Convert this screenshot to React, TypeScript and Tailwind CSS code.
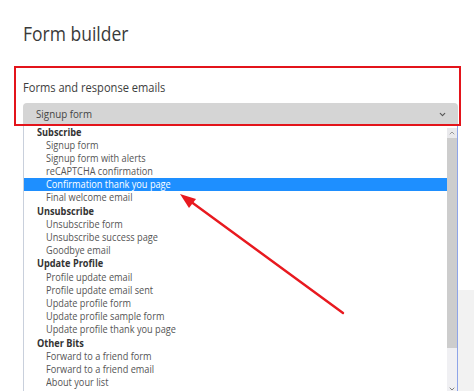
import { ChevronDown, ChevronUp } from 'lucide-react';

const groups: Array<{ title: string; items: string[] }> = [
  {
    title: 'Subscribe',
    items: [
      'Signup form',
      'Signup form with alerts',
      'reCAPTCHA confirmation',
      'Confirmation thank you page',
      'Final welcome email',
    ],
  },
  {
    title: 'Unsubscribe',
    items: ['Unsubscribe form', 'Unsubscribe success page', 'Goodbye email'],
  },
  {
    title: 'Update Profile',
    items: [
      'Profile update email',
      'Profile update email sent',
      'Update profile form',
      'Update profile sample form',
      'Update profile thank you page',
    ],
  },
  {
    title: 'Other Bits',
    items: ['Forward to a friend form', 'Forward to a friend email', 'About your list'],
  },
];

const selected = 'Confirmation thank you page';

export default function App() {
  return (
    <div
      className="relative w-[474px] h-[391px] overflow-hidden bg-white text-[#333]"
      style={{ fontFamily: '"Open Sans", "Noto Sans", sans-serif' }}
    >
      <div className="flex h-full">
        {/* Main column */}
        <div className="w-[458px] shrink-0 pl-[23px]">
          <h1 className="pt-[20px] text-[20px] leading-[27px] text-[#3a3a3a]">
            <span className="inline-block origin-left scale-x-[0.875] whitespace-nowrap">Form builder</span>
          </h1>

          <p className="mt-[31px] text-[12.7px] leading-[18px] text-[#3d3d3d]">
            <span className="inline-block origin-left scale-x-[0.875] whitespace-nowrap">
              Forms and response emails
            </span>
          </p>

          {/* Select */}
          <div className="mt-[7px] h-[22px] rounded-t-[4px] bg-[#d5d5d5] flex items-center justify-between pl-[13px] pr-[11px]">
            <span className="inline-block origin-left scale-x-[0.875] whitespace-nowrap text-[11.2px] text-[#444]">
              Signup form
            </span>
            <ChevronDown size={9} strokeWidth={3} className="text-[#555]" />
          </div>

          {/* Dropdown list */}
          <div className="h-[270px] flex border-l border-[#c9d0dc]">
            <div className="flex-1 pt-[0.5px]">
              {groups.map((g) => (
                <div key={g.title}>
                  <div className="h-[13.2px] leading-[13.2px] pl-[13px] text-[10.5px] font-bold text-[#333]">
                    <span className="inline-block origin-left scale-x-[0.875] whitespace-nowrap">{g.title}</span>
                  </div>
                  {g.items.map((item) => (
                    <div
                      key={item}
                      className={`h-[13.2px] leading-[13.2px] pl-[22px] text-[10.5px] ${
                        item === selected ? 'bg-[#1e8fff] text-white' : 'text-[#555]'
                      }`}
                    >
                      <span className="inline-block origin-left scale-x-[0.875] whitespace-nowrap">{item}</span>
                    </div>
                  ))}
                </div>
              ))}
            </div>

            {/* Scrollbar */}
            <div className="w-[11px] pt-[3px] flex flex-col border-r border-[#8ea4e8]">
              <div className="flex flex-col h-[220px] bg-[#cdcdcd]">
                <div className="h-[10px] bg-[#e9e9ec] flex items-center justify-center">
                  <ChevronUp size={8} strokeWidth={2.5} className="text-[#888]" />
                </div>
              </div>
              <div className="flex-1 bg-[#f0f0f3] flex flex-col justify-end items-center pb-[2px]">
                <ChevronDown size={8} strokeWidth={2.5} className="text-[#666]" />
              </div>
            </div>
          </div>
        </div>

        {/* Right side panel */}
        <div className="flex-1 pt-[290px]">
          <div className="h-full bg-[#f2f2f2]" />
        </div>
      </div>

      {/* Annotation: red highlight box */}
      <div className="absolute left-[14px] top-[66px] w-[447px] h-[60px] border-2 border-[#e3141b] pointer-events-none" />

      {/* Annotation: arrow */}
      <svg
        className="absolute left-0 top-0 pointer-events-none"
        width="474"
        height="391"
        viewBox="0 0 474 391"
      >
        <line x1="343" y1="313" x2="190" y2="201" stroke="#e8191f" strokeWidth="2.4" strokeLinecap="round" />
        <polygon points="180,194 196,199 189,208" fill="#e8191f" />
      </svg>
    </div>
  );
}
